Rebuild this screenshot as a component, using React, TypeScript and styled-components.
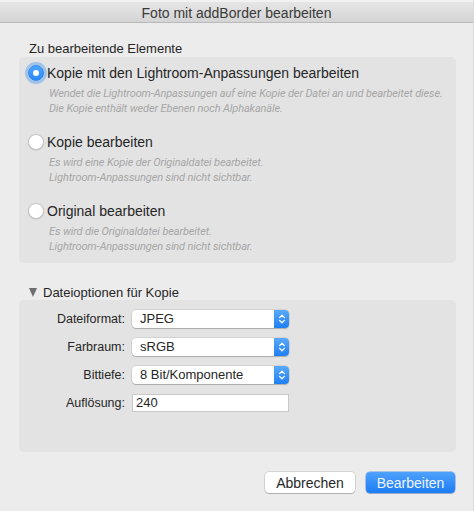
import React from "react";
import styled, { createGlobalStyle } from "styled-components";

const GlobalStyle = createGlobalStyle`
  html, body {
    margin: 0;
    padding: 0;
    background: #ececec;
  }
  body {
    font-family: "Liberation Sans", Arial, sans-serif;
    -webkit-font-smoothing: antialiased;
  }
`;

interface EditOption {
  id: string;
  label: string;
  lines: string[];
}

const editOptions: EditOption[] = [
  {
    id: "lr",
    label: "Kopie mit den Lightroom-Anpassungen bearbeiten",
    lines: [
      "Wendet die Lightroom-Anpassungen auf eine Kopie der Datei an und bearbeitet diese.",
      "Die Kopie enthält weder Ebenen noch Alphakanäle.",
    ],
  },
  {
    id: "copy",
    label: "Kopie bearbeiten",
    lines: [
      "Es wird eine Kopie der Originaldatei bearbeitet.",
      "Lightroom-Anpassungen sind nicht sichtbar.",
    ],
  },
  {
    id: "original",
    label: "Original bearbeiten",
    lines: [
      "Es wird die Originaldatei bearbeitet.",
      "Lightroom-Anpassungen sind nicht sichtbar.",
    ],
  },
];

const fileOptions = [
  { label: "Dateiformat:", value: "JPEG" },
  { label: "Farbraum:", value: "sRGB" },
  { label: "Bittiefe:", value: "8 Bit/Komponente" },
];

const Stepper = () => (
  <svg width="8" height="12" viewBox="0 0 8 12">
    <path d="M1.6 4.6 L4 2.2 L6.4 4.6" fill="none" stroke="#fff" strokeWidth="1.3" strokeLinecap="round" strokeLinejoin="round" />
    <path d="M1.6 7.4 L4 9.8 L6.4 7.4" fill="none" stroke="#fff" strokeWidth="1.3" strokeLinecap="round" strokeLinejoin="round" />
  </svg>
);

const App: React.FC = () => {
  const selected = "lr";

  return (
    <Window>
      <GlobalStyle />
      <TitleBar>Foto mit addBorder bearbeiten</TitleBar>
      <Body>
        <SectionLabel>Zu bearbeitende Elemente</SectionLabel>
        <Panel>
          {editOptions.map((opt) => (
            <Option key={opt.id}>
              <OptionHead>
                <Radio $checked={opt.id === selected} />
                <OptionLabel>{opt.label}</OptionLabel>
              </OptionHead>
              <Description>
                {opt.lines.map((line) => (
                  <div key={line}>{line}</div>
                ))}
              </Description>
            </Option>
          ))}
        </Panel>

        <Disclosure>
          <Triangle />
          Dateioptionen für Kopie
        </Disclosure>
        <FormPanel>
          {fileOptions.map((row) => (
            <React.Fragment key={row.label}>
              <FieldLabel>{row.label}</FieldLabel>
              <Select>
                <span>{row.value}</span>
                <StepperBox>
                  <Stepper />
                </StepperBox>
              </Select>
            </React.Fragment>
          ))}
          <FieldLabel>Auflösung:</FieldLabel>
          <TextInput>240</TextInput>
        </FormPanel>

        <Footer>
          <Button>Abbrechen</Button>
          <Button $primary>Bearbeiten</Button>
        </Footer>
      </Body>
    </Window>
  );
};

export default App;

const Window = styled.div`
  width: 474px;
  height: 511px;
  background: #ececec;
  display: flex;
  flex-direction: column;
  box-sizing: border-box;
  border-right: 1px solid #dcdcdc;
  overflow: hidden;
`;

const TitleBar = styled.div`
  height: 23px;
  flex-shrink: 0;
  display: flex;
  align-items: center;
  justify-content: center;
  background: linear-gradient(#e6e6e6, #d4d4d4);
  border-top: 2px solid #f2f2f2;
  border-bottom: 1px solid #b9b9b9;
  box-sizing: border-box;
  font-size: 14px;
  color: #3a3a3a;
  padding-top: 1px;
`;

const Body = styled.div`
  display: flex;
  flex-direction: column;
  padding: 0 17px 0 19px;
`;

const SectionLabel = styled.div`
  margin-top: 18px;
  padding-left: 10px;
  font-size: 13px;
  line-height: 16px;
  color: #262626;
`;

const Panel = styled.div`
  background: #e3e3e3;
  border-radius: 5px;
  padding: 6px 0 9px 9px;
  display: flex;
  flex-direction: column;
  gap: 16px;
`;

const Option = styled.div`
  display: flex;
  flex-direction: column;
`;

const OptionHead = styled.div`
  display: flex;
  align-items: center;
  gap: 3px;
  height: 20px;
`;

const Radio = styled.span<{ $checked?: boolean }>`
  width: 16px;
  height: 16px;
  border-radius: 50%;
  box-sizing: border-box;
  flex-shrink: 0;
  position: relative;
  background: ${(p) => (p.$checked ? "linear-gradient(#4da4fd, #2a8af6)" : "#fff")};
  border: 1px solid ${(p) => (p.$checked ? "#2d86ec" : "#c4c4c4")};
  box-shadow: ${(p) =>
    p.$checked ? "0 0 0 3px rgba(80, 155, 240, 0.45)" : "0 0.5px 1px rgba(0,0,0,0.15)"};

  &::after {
    content: "";
    display: ${(p) => (p.$checked ? "block" : "none")};
    position: absolute;
    left: 4px;
    top: 4px;
    width: 6px;
    height: 6px;
    border-radius: 50%;
    background: #fff;
  }
`;

const OptionLabel = styled.span`
  font-size: 14px;
  color: #262626;
  white-space: nowrap;
`;

const Description = styled.div`
  margin: 3px 0 0 21px;
  font-family: Roboto, "Open Sans", sans-serif;
  font-style: italic;
  font-size: 11px;
  letter-spacing: -0.13px;
  line-height: 15px;
  color: #a6a6a6;
  white-space: nowrap;
`;

const Disclosure = styled.div`
  margin-top: 21px;
  padding-left: 10px;
  display: flex;
  align-items: center;
  gap: 6px;
  height: 16px;
  font-size: 13px;
  color: #262626;
`;

const Triangle = styled.span`
  width: 0;
  height: 0;
  border-left: 4.5px solid transparent;
  border-right: 4.5px solid transparent;
  border-top: 9px solid #6e6e6e;
`;

const FormPanel = styled.div`
  margin-top: 0;
  height: 152px;
  box-sizing: border-box;
  background: #e3e3e3;
  border-radius: 5px;
  padding-top: 10px;
  display: grid;
  grid-template-columns: 106px 157px;
  grid-auto-rows: 18px;
  column-gap: 7px;
  row-gap: 10px;
  align-content: start;
`;

const FieldLabel = styled.div`
  text-align: right;
  font-size: 12.5px;
  line-height: 18px;
  color: #262626;
`;

const Select = styled.div`
  display: flex;
  align-items: stretch;
  background: #fff;
  border-radius: 4px;
  box-shadow: 0 0 0 0.5px rgba(0, 0, 0, 0.15), 0 1px 1px rgba(0, 0, 0, 0.18);
  font-size: 13px;
  color: #262626;
  overflow: hidden;

  span {
    flex: 1;
    padding-left: 8px;
    line-height: 18px;
  }
`;

const StepperBox = styled.div`
  width: 15px;
  display: flex;
  align-items: center;
  justify-content: center;
  background: linear-gradient(#5aa9fb, #1f7ff3);
`;

const TextInput = styled.div`
  background: #fff;
  border: 1px solid #c9c9c9;
  box-sizing: border-box;
  padding-left: 3px;
  font-size: 13px;
  line-height: 16px;
  color: #262626;
`;

const Footer = styled.div`
  margin-top: 20px;
  padding-right: 1px;
  display: flex;
  justify-content: flex-end;
  gap: 11px;
`;

const Button = styled.button<{ $primary?: boolean }>`
  width: ${(p) => (p.$primary ? "89px" : "90px")};
  height: 21px;
  border-radius: 4px;
  font-family: "Liberation Sans", Arial, sans-serif;
  font-size: 14px;
  padding: 0;
  cursor: pointer;
  color: ${(p) => (p.$primary ? "#eef5ff" : "#262626")};
  background: ${(p) => (p.$primary ? "linear-gradient(#4fa2fb, #1b7cf3)" : "#fff")};
  border: none;
  box-shadow: ${(p) =>
    p.$primary
      ? "0 0 0 0.5px rgba(20, 100, 220, 0.6), 0 1px 1px rgba(0,0,0,0.15)"
      : "0 0 0 0.5px rgba(0, 0, 0, 0.2), 0 1px 1px rgba(0,0,0,0.18)"};
`;
